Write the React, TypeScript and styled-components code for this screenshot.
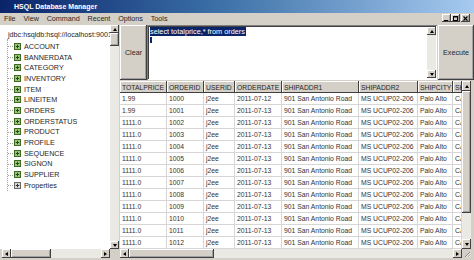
import React from "react";
import styled, { createGlobalStyle, css } from "styled-components";

const FACE = "#d4d0c8";
const TEXT = "#262626";

const GlobalStyle = createGlobalStyle`
  html, body { margin: 0; padding: 0; background: ${FACE}; }
  body { font-family: "Liberation Sans", Arial, sans-serif; }
`;

const raised = css`
  box-shadow: inset -1px -1px #404040, inset 1px 1px #ffffff, inset -2px -2px #a0a0a0;
`;

const sunken = css`
  box-shadow: inset 1px 1px #808080, inset -1px -1px #ffffff, inset 2px 2px #404040;
`;

const Window = styled.div`
  width: 474px;
  height: 260px;
  display: flex;
  flex-direction: column;
  background: ${FACE};
  overflow: hidden;
  font-size: 7.2px;
  color: ${TEXT};
`;

const TitleBar = styled.div`
  height: 13px;
  flex: none;
  display: flex;
  align-items: center;
  padding-left: 14px;
  background: linear-gradient(to right, #0a246a, #3a6ea5 45%, #a6caf0);
  color: #ffffff;
  font-weight: bold;
  font-size: 7px;
`;

const MenuBar = styled.div`
  height: 12px;
  flex: none;
  display: flex;
  align-items: center;
  gap: 7.8px;
  padding-left: 4px;
`;

const MenuItem = styled.span`
  line-height: 12px;
`;

const WinControls = styled.div`
  margin-left: auto;
  margin-right: 4px;
  display: flex;
  align-self: flex-start;
  margin-top: 1px;
`;

const WinButton = styled.div<{ $gap?: boolean }>`
  width: 9px;
  height: 8px;
  margin-left: ${(p) => (p.$gap ? "1px" : "0")};
  background: ${FACE};
  ${raised};
  display: flex;
  align-items: center;
  justify-content: center;
`;

const Main = styled.div`
  flex: 1;
  display: flex;
  min-height: 0;
`;

const LeftPane = styled.div`
  width: 119px;
  margin-right: 1px;
  display: grid;
  grid-template-columns: 1fr 9px;
  grid-template-rows: 1fr 9px;
  padding-bottom: 2px;
`;

const Tree = styled.div`
  background: #ffffff;
  padding-top: 3px;
  overflow: hidden;
  white-space: nowrap;
`;

const TreeRoot = styled.div`
  height: 13px;
  display: flex;
  align-items: center;
  padding-left: 4px;
  gap: 4px;
`;

const TreeChildren = styled.div`
  margin-left: 7px;
  border-left: 1px dotted #a0a0a0;
  margin-top: -2px;
  padding-top: 2px;
`;

const TreeRow = styled.div`
  position: relative;
  height: 10.7px;
  display: flex;
  align-items: center;
  padding-left: 6px;
  gap: 3px;
  &::before {
    content: "";
    position: absolute;
    left: 0;
    top: 50%;
    width: 5px;
    border-top: 1px dotted #a0a0a0;
  }
`;

const Corner = styled.div`
  background: ${FACE};
`;

const RightPane = styled.div`
  flex: 1;
  display: flex;
  flex-direction: column;
  min-width: 0;
`;

const QueryRow = styled.div`
  height: 55px;
  flex: none;
  display: flex;
  margin-bottom: 1px;
`;

const PushButton = styled.div<{ $w: number }>`
  width: ${(p) => p.$w}px;
  flex: none;
  background: ${FACE};
  ${raised};
  display: flex;
  align-items: center;
  justify-content: center;
  font-size: 7.2px;
`;

const QueryBox = styled.div`
  flex: 1;
  margin: 0 1px 0 0;
  background: #ffffff;
  ${sunken};
  display: flex;
  padding: 2px 1px 2px 2px;
`;

const QueryText = styled.div`
  flex: 1;
  padding-left: 1px;
  font-size: 7.3px;
  line-height: 9px;
`;

const Selected = styled.span`
  background: #0a246a;
  color: #ffffff;
  padding-right: 1px;
`;

const Caret = styled.div`
  width: 2px;
  height: 6px;
  margin-top: 1px;
  background: #0a246a;
`;

const TableArea = styled.div`
  flex: 1;
  display: grid;
  grid-template-columns: 1fr 9px;
  grid-template-rows: 1fr 9px;
  padding-right: 3px;
  padding-bottom: 2px;
  min-height: 0;
`;

const COLS = [47, 37, 31, 47, 77, 59, 35, 9];

const Grid = styled.div`
  display: grid;
  grid-template-columns: ${COLS.map((c) => c + "px").join(" ")};
  grid-auto-rows: 12px;
  background: #ffffff;
  overflow: hidden;
  white-space: nowrap;
  font-size: 6.8px;
`;

const HeadCell = styled.div`
  background: ${FACE};
  box-shadow: inset -1px -1px #404040, inset 1px 1px #ffffff;
  display: flex;
  align-items: center;
  padding-left: 2px;
  overflow: hidden;
`;

const Cell = styled.div`
  border-right: 1px solid #d6d6d6;
  border-bottom: 1px solid #d6d6d6;
  display: flex;
  align-items: center;
  padding-left: 2px;
  overflow: hidden;
  color: #333333;
`;

const VBar = styled.div`
  display: flex;
  flex-direction: column;
  background: #ebe9e4;
`;

const HBar = styled.div<{ $pl?: number }>`
  display: flex;
  padding-left: ${(p) => p.$pl ?? 0}px;
  background: ${FACE};
`;

const HTrack = styled.div`
  flex: 1;
  display: flex;
  background: #ebe9e4;
`;

const VTrack = styled.div`
  flex: 1;
  display: flex;
  flex-direction: column;
  background: #ebe9e4;
`;

const Thumb = styled.div<{ $len: number; $vertical?: boolean }>`
  flex: none;
  ${(p) => (p.$vertical ? `height: ${p.$len}px;` : `width: ${p.$len}px;`)}
  background: ${FACE};
  ${raised};
`;

type Dir = "up" | "down" | "left" | "right";

const triangle = (d: Dir) => {
  switch (d) {
    case "up":
      return "border-left: 2.5px solid transparent; border-right: 2.5px solid transparent; border-bottom: 3px solid #000;";
    case "down":
      return "border-left: 2.5px solid transparent; border-right: 2.5px solid transparent; border-top: 3px solid #000;";
    case "left":
      return "border-top: 2.5px solid transparent; border-bottom: 2.5px solid transparent; border-right: 3px solid #000;";
    default:
      return "border-top: 2.5px solid transparent; border-bottom: 2.5px solid transparent; border-left: 3px solid #000;";
  }
};

const Arrow = styled.div<{ $dir: Dir; $h?: number }>`
  width: 9px;
  height: ${(p) => p.$h ?? 9}px;
  flex: none;
  background: ${FACE};
  box-shadow: inset -1px -1px #404040, inset 1px 1px #ffffff;
  display: flex;
  align-items: center;
  justify-content: center;
  &::after {
    content: "";
    width: 0;
    height: 0;
    ${(p) => triangle(p.$dir)}
  }
`;

const Grip = styled.div`
  background: ${FACE};
  display: flex;
  align-items: flex-end;
  justify-content: flex-end;
`;

const TREE_ITEMS = [
  "ACCOUNT",
  "BANNERDATA",
  "CATEGORY",
  "INVENTORY",
  "ITEM",
  "LINEITEM",
  "ORDERS",
  "ORDERSTATUS",
  "PRODUCT",
  "PROFILE",
  "SEQUENCE",
  "SIGNON",
  "SUPPLIER",
];

const HEADERS = [
  "TOTALPRICE",
  "ORDERID",
  "USERID",
  "ORDERDATE",
  "SHIPADDR1",
  "SHIPADDR2",
  "SHIPCITY",
  "SHIPSTATE",
];

const ROWS = Array.from({ length: 13 }, (_, i) => [
  i < 2 ? "1.99" : "1111.0",
  String(1000 + i),
  "j2ee",
  i === 0 ? "2011-07-12" : "2011-07-13",
  "901 San Antonio Road",
  "MS UCUP02-206",
  "Palo Alto",
  "CA",
]);

const NodeIcon = ({ kind }: { kind: "minus" | "table" | "props" }) => {
  if (kind === "minus") {
    return (
      <svg width="7" height="7" viewBox="0 0 7 7">
        <rect x="0.5" y="0.5" width="6" height="6" fill="#fff" stroke="#555" />
        <path d="M2 3.5H5" stroke="#333" />
      </svg>
    );
  }
  const green = kind === "table";
  return (
    <svg width="7" height="7" viewBox="0 0 7 7">
      <rect
        x="0.5"
        y="0.5"
        width="6"
        height="6"
        fill={green ? "#9cc47a" : "#d8d8d8"}
        stroke={green ? "#3d6b22" : "#6a6a6a"}
      />
      <path d="M3.5 1.8V5.2M1.8 3.5H5.2" stroke={green ? "#1f4a10" : "#333"} />
    </svg>
  );
};

const App = () => {
  return (
    <>
      <GlobalStyle />
      <Window>
        <TitleBar>HSQL Database Manager</TitleBar>
        <MenuBar>
          <MenuItem>File</MenuItem>
          <MenuItem>View</MenuItem>
          <MenuItem>Command</MenuItem>
          <MenuItem>Recent</MenuItem>
          <MenuItem>Options</MenuItem>
          <MenuItem>Tools</MenuItem>
          <WinControls>
            <WinButton>
              <svg width="5" height="5" viewBox="0 0 5 5">
                <path d="M0 4.5H4" stroke="#000" />
              </svg>
            </WinButton>
            <WinButton>
              <svg width="5" height="5" viewBox="0 0 5 5">
                <rect x="0.5" y="0.5" width="4" height="4" fill="none" stroke="#000" />
                <path d="M0 1H5" stroke="#000" />
              </svg>
            </WinButton>
            <WinButton $gap>
              <svg width="5" height="5" viewBox="0 0 5 5">
                <path d="M0.5 0.5L4.5 4.5M4.5 0.5L0.5 4.5" stroke="#000" strokeWidth="1.1" />
              </svg>
            </WinButton>
          </WinControls>
        </MenuBar>
        <Main>
          <LeftPane>
            <Tree>
              <TreeRoot>
                <NodeIcon kind="minus" />
                <span>jdbc:hsqldb:hsql://localhost:9001</span>
              </TreeRoot>
              <TreeChildren>
                {TREE_ITEMS.map((t) => (
                  <TreeRow key={t}>
                    <NodeIcon kind="table" />
                    <span>{t}</span>
                  </TreeRow>
                ))}
                <TreeRow>
                  <NodeIcon kind="props" />
                  <span>Properties</span>
                </TreeRow>
              </TreeChildren>
            </Tree>
            <VBar>
              <Arrow $dir="up" $h={8} />
              <VTrack>
                <Thumb $vertical $len={13} />
              </VTrack>
              <Arrow $dir="down" $h={8} />
            </VBar>
            <HBar $pl={2}>
              <Arrow $dir="left" />
              <HTrack>
                <Thumb $len={40} />
              </HTrack>
              <Arrow $dir="right" />
            </HBar>
            <Corner />
          </LeftPane>
          <RightPane>
            <QueryRow>
              <PushButton $w={27}>Clear</PushButton>
              <QueryBox>
                <QueryText>
                  <Selected>select totalprice,* from orders</Selected>
                  <Caret />
                </QueryText>
                <VBar>
                  <Arrow $dir="up" $h={8} />
                  <VTrack />
                  <Arrow $dir="down" $h={8} />
                </VBar>
              </QueryBox>
              <PushButton $w={36}>Execute</PushButton>
            </QueryRow>
            <TableArea>
              <Grid>
                {HEADERS.map((h) => (
                  <HeadCell key={h}>{h}</HeadCell>
                ))}
                {ROWS.map((r, i) =>
                  r.map((v, j) => <Cell key={i + "-" + j}>{v}</Cell>)
                )}
              </Grid>
              <VBar>
                <Arrow $dir="up" $h={10} />
                <VTrack>
                  <Thumb $vertical $len={122} />
                </VTrack>
                <Arrow $dir="down" $h={10} />
              </VBar>
              <HBar>
                <Arrow $dir="left" />
                <HTrack>
                  <Thumb $len={85} />
                </HTrack>
                <Arrow $dir="right" />
              </HBar>
              <Grip>
                <svg width="8" height="8" viewBox="0 0 8 8">
                  <path d="M7 2L2 7M7 4.5L4.5 7" stroke="#808080" />
                  <path d="M7.5 2.8L2.8 7.5M7.5 5.3L5.3 7.5" stroke="#fff" />
                </svg>
              </Grip>
            </TableArea>
          </RightPane>
        </Main>
      </Window>
    </>
  );
};

export default App;
